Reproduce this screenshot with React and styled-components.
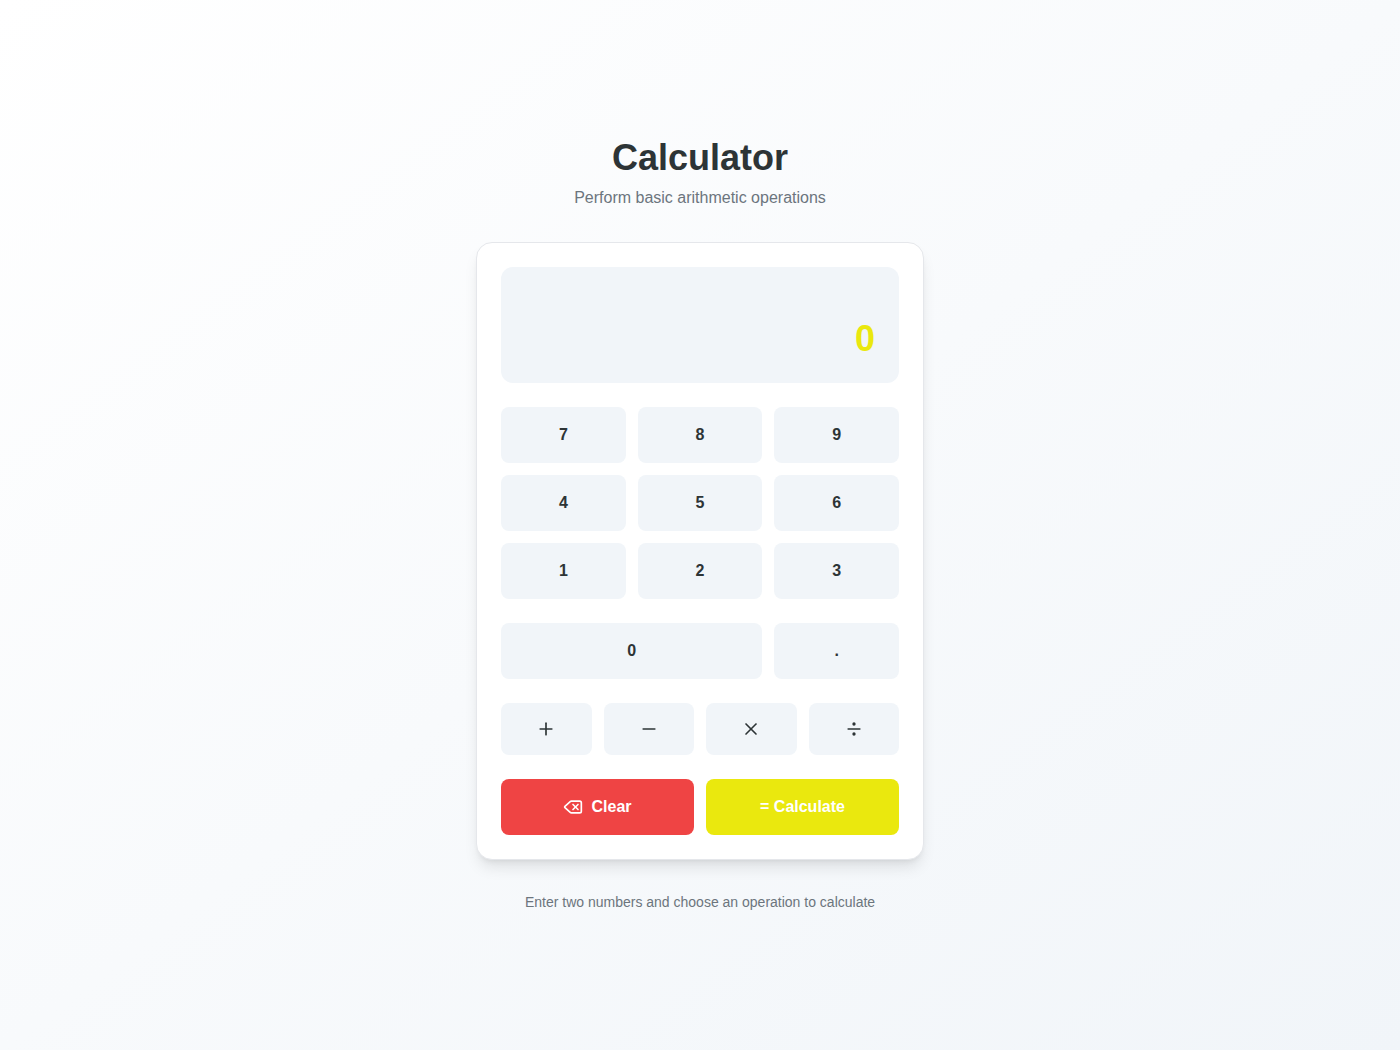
import { useState } from 'react';
import styled, { createGlobalStyle } from 'styled-components';
import { Plus, Minus, X, Divide, Delete } from 'lucide-react';

const digits = ['7', '8', '9', '4', '5', '6', '1', '2', '3'];

const operations = [
  { name: 'add', sign: '+', Icon: Plus, run: (a, b) => a + b },
  { name: 'subtract', sign: '−', Icon: Minus, run: (a, b) => a - b },
  { name: 'multiply', sign: '×', Icon: X, run: (a, b) => a * b },
  { name: 'divide', sign: '÷', Icon: Divide, run: (a, b) => a / b },
];

function App() {
  const [current, setCurrent] = useState('0');
  const [previous, setPrevious] = useState(null);
  const [operation, setOperation] = useState(null);
  const [fresh, setFresh] = useState(true);

  const inputDigit = (digit) => {
    setCurrent(fresh || current === '0' ? digit : current + digit);
    setFresh(false);
  };

  const inputDot = () => {
    if (fresh) {
      setCurrent('0.');
    } else if (!current.includes('.')) {
      setCurrent(current + '.');
    }
    setFresh(false);
  };

  const chooseOperation = (next) => {
    setPrevious(current);
    setOperation(next);
    setFresh(true);
  };

  const clear = () => {
    setCurrent('0');
    setPrevious(null);
    setOperation(null);
    setFresh(true);
  };

  const calculate = () => {
    if (!operation) return;
    const result = operation.run(Number(previous), Number(current));
    setCurrent(Number.isFinite(result) ? String(result) : 'Error');
    setPrevious(null);
    setOperation(null);
    setFresh(true);
  };

  return (
    <Page>
      <GlobalStyle />
      <Content>
        <Header>
          <Title>Calculator</Title>
          <Subtitle>Perform basic arithmetic operations</Subtitle>
        </Header>
        <Card>
          <Display>
            <Expression>{operation && `${previous} ${operation.sign}`}</Expression>
            <Value>{current}</Value>
          </Display>
          <KeyGrid $columns={3}>
            {digits.map((digit) => (
              <Key key={digit} type="button" onClick={() => inputDigit(digit)}>{digit}</Key>
            ))}
          </KeyGrid>
          <KeyGrid $columns={3}>
            <Key type="button" $span={2} onClick={() => inputDigit('0')}>0</Key>
            <Key type="button" onClick={inputDot}>.</Key>
          </KeyGrid>
          <KeyGrid $columns={4}>
            {operations.map((item) => (
              <Key key={item.name} type="button" aria-label={item.name} onClick={() => chooseOperation(item)}>
                <item.Icon size={20} />
              </Key>
            ))}
          </KeyGrid>
          <KeyGrid $columns={2}>
            <ActionKey type="button" $color="#ef4444" onClick={clear}>
              <Delete size={20} />
              Clear
            </ActionKey>
            <ActionKey type="button" $color="#eae80e" onClick={calculate}>= Calculate</ActionKey>
          </KeyGrid>
        </Card>
        <Hint>Enter two numbers and choose an operation to calculate</Hint>
      </Content>
    </Page>
  );
}

const GlobalStyle = createGlobalStyle`
  *, *::before, *::after {
    box-sizing: border-box;
  }

  body {
    margin: 0;
    font-family: "Liberation Sans", Arial, sans-serif;
    font-size: 16px;
    line-height: 24px;
    color: #2d3436;
  }

  h1, p {
    margin: 0;
  }
`;

const Page = styled.main`
  display: flex;
  align-items: center;
  justify-content: center;
  min-height: 100vh;
  padding: 16px;
  background: linear-gradient(to bottom right, #ffffff, #f1f5f9);
`;

const Content = styled.div`
  display: flex;
  flex-direction: column;
  gap: 32px;
  width: 100%;
  max-width: 448px;
`;

const Header = styled.header`
  display: flex;
  flex-direction: column;
  gap: 8px;
  text-align: center;
`;

const Title = styled.h1`
  font-size: 36px;
  font-weight: 700;
  line-height: 40px;
`;

const Subtitle = styled.p`
  color: #6c757d;
`;

const Card = styled.section`
  display: flex;
  flex-direction: column;
  gap: 24px;
  padding: 24px;
  border: 1px solid #e5e7eb;
  border-radius: 16px;
  background: #ffffff;
  box-shadow: 0 10px 15px -3px rgba(0, 0, 0, 0.1), 0 4px 6px -4px rgba(0, 0, 0, 0.1);
`;

const Display = styled.div`
  padding: 24px;
  border-radius: 12px;
  background: #f1f5f9;
  text-align: right;
`;

const Expression = styled.div`
  min-height: 20px;
  margin-bottom: 8px;
  font-size: 14px;
  line-height: 20px;
  color: #6c757d;
`;

const Value = styled.div`
  font-size: 36px;
  font-weight: 700;
  line-height: 40px;
  color: #eae80e;
  overflow-wrap: anywhere;
`;

const KeyGrid = styled.div`
  display: grid;
  grid-template-columns: repeat(${({ $columns }) => $columns}, minmax(0, 1fr));
  gap: 12px;
`;

const Key = styled.button`
  display: flex;
  align-items: center;
  justify-content: center;
  gap: 8px;
  grid-column: span ${({ $span }) => $span || 1};
  padding: 16px;
  border: 0;
  border-radius: 8px;
  background: #f1f5f9;
  color: #2d3436;
  font-family: inherit;
  font-size: 16px;
  font-weight: 600;
  line-height: 24px;
  cursor: pointer;

  &:hover {
    filter: brightness(0.96);
  }
`;

const ActionKey = styled(Key)`
  background: ${({ $color }) => $color};
  color: #ffffff;
`;

const Hint = styled.p`
  font-size: 14px;
  line-height: 20px;
  text-align: center;
  color: #6c757d;
`;

export default App;
